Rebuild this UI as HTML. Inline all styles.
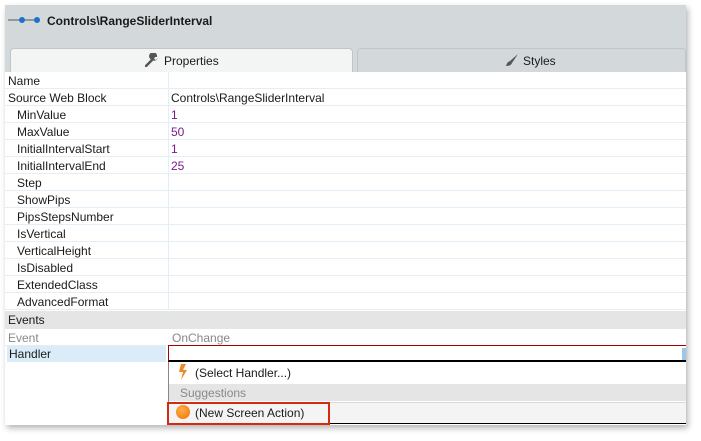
<!DOCTYPE html><html><head><style>
body{margin:0;width:701px;height:441px;background:#fff;font-family:"Liberation Sans",sans-serif;font-size:12px;color:#1a1a1a;position:relative;overflow:hidden}
.a{position:absolute}
.panel{left:5px;top:5px;width:681px;height:420px;background:#fff;box-shadow:2px 3px 6px rgba(0,0,0,.3)}
.hdr{left:5px;top:5px;width:681px;height:67px;background:#d3d9db}
.row{position:absolute;left:5px;width:681px;height:17px;border-bottom:1px solid #e3eef7;box-sizing:border-box;line-height:18px}
.row .k{position:absolute;left:3px}
.row .k2{position:absolute;left:12px}
.row .v{position:absolute;left:166px}
.div{position:absolute;left:168px;top:72px;width:1px;height:238px;background:#e3eef7}
.p{color:#7a1a8a}
</style></head><body>
<div class="a panel"></div>
<div class="a hdr"></div>
<svg class="a" style="left:8px;top:16px" width="34" height="8"><line x1="0" y1="4" x2="32" y2="4" stroke="#555" stroke-width="1"/><circle cx="14" cy="4" r="3" fill="#1f6fd1"/><circle cx="29" cy="4" r="3" fill="#1f6fd1"/></svg>
<div class="a" style="left:47px;top:14px;font-weight:bold;font-size:12px">Controls\RangeSliderInterval</div>
<div class="a" style="left:10px;top:48px;width:343px;height:24px;background:#f3f5f5;border:1px solid #bfc6c9;border-bottom:none;border-radius:4px 4px 0 0;box-sizing:border-box"></div>
<svg class="a" style="left:145px;top:53px" width="14" height="14"><path d="M1 13 L8 6" stroke="#555" stroke-width="2.5" stroke-linecap="round"/><path d="M7 7 A4 4 0 1 1 12 4 L10 4 L9 6 L11 7 L13 5 A4 4 0 0 1 7 7 Z" fill="#555"/></svg>
<div class="a" style="left:164px;top:54px">Properties</div>
<div class="a" style="left:357px;top:48px;width:329px;height:24px;background:#d3d9db;border:1px solid #bfc6c9;border-bottom:none;border-radius:4px 4px 0 0;box-sizing:border-box"></div>
<svg class="a" style="left:505px;top:53px" width="14" height="14"><path d="M13 1 L5 8 L7 10 Z" fill="#555"/><path d="M5 8 Q2 9 1 13 Q6 13 7 10 Z" fill="#555"/></svg>
<div class="a" style="left:523px;top:54px">Styles</div>
<div class="div"></div>
<div class="row" style="top:72px"><span class="k">Name</span></div>
<div class="row" style="top:89px"><span class="k">Source Web Block</span><span class="v">Controls\RangeSliderInterval</span></div>
<div class="row" style="top:106px"><span class="k2">MinValue</span><span class="v p">1</span></div>
<div class="row" style="top:123px"><span class="k2">MaxValue</span><span class="v p">50</span></div>
<div class="row" style="top:140px"><span class="k2">InitialIntervalStart</span><span class="v p">1</span></div>
<div class="row" style="top:157px"><span class="k2">InitialIntervalEnd</span><span class="v p">25</span></div>
<div class="row" style="top:174px"><span class="k2">Step</span></div>
<div class="row" style="top:191px"><span class="k2">ShowPips</span></div>
<div class="row" style="top:208px"><span class="k2">PipsStepsNumber</span></div>
<div class="row" style="top:225px"><span class="k2">IsVertical</span></div>
<div class="row" style="top:242px"><span class="k2">VerticalHeight</span></div>
<div class="row" style="top:259px"><span class="k2">IsDisabled</span></div>
<div class="row" style="top:276px"><span class="k2">ExtendedClass</span></div>
<div class="row" style="top:293px"><span class="k2">AdvancedFormat</span></div>
<div class="row" style="top:311px;height:18px;background:#e5e5e5;border:none;line-height:19px"><span class="k">Events</span></div>
<div class="row" style="top:329px;color:#888"><span class="k">Event</span><span class="v" style="left:167px">OnChange</span></div>
<div class="a" style="left:7px;top:346px;width:157px;height:16px;background:#d9ecf8;line-height:17px;padding-left:2px">Handler</div>
<div class="a" style="left:168px;top:345px;width:518px;height:17px;border-top:1px solid #a00;border-left:1px solid #a00;border-bottom:2px solid #000;box-sizing:border-box"></div>
<div class="a" style="left:682px;top:348px;width:4px;height:12px;background:#9cc8e8"></div>
<div class="a" style="left:168px;top:362px;width:518px;height:62px;border-left:1px solid #888;border-bottom:2px solid #000;box-sizing:border-box"></div>
<svg class="a" style="left:178px;top:364px" width="10" height="16"><path d="M3 0 L8 0 L5 6 L9 6 L3 16 L5 8 L1 8 Z" fill="#f08a20"/></svg>
<div class="a" style="left:195px;top:366px">(Select Handler...)</div>
<div class="a" style="left:169px;top:384px;width:517px;height:17px;background:#e5e5e5;color:#888;line-height:18px;padding-left:11px;box-sizing:border-box">Suggestions</div>
<div class="a" style="left:169px;top:402px;width:517px;height:20px;background:#f4f4f4;border-top:1px solid #d8d8d8"></div>
<div class="a" style="left:176px;top:405px;width:14px;height:14px;border-radius:50%;background:radial-gradient(circle at 40% 35%,#ffae4a,#f07000)"></div>
<div class="a" style="left:195px;top:406px">(New Screen Action)</div>
<div class="a" style="left:167px;top:402px;width:163px;height:23px;border:2px solid #d42a10;box-sizing:border-box"></div>
</body></html>
